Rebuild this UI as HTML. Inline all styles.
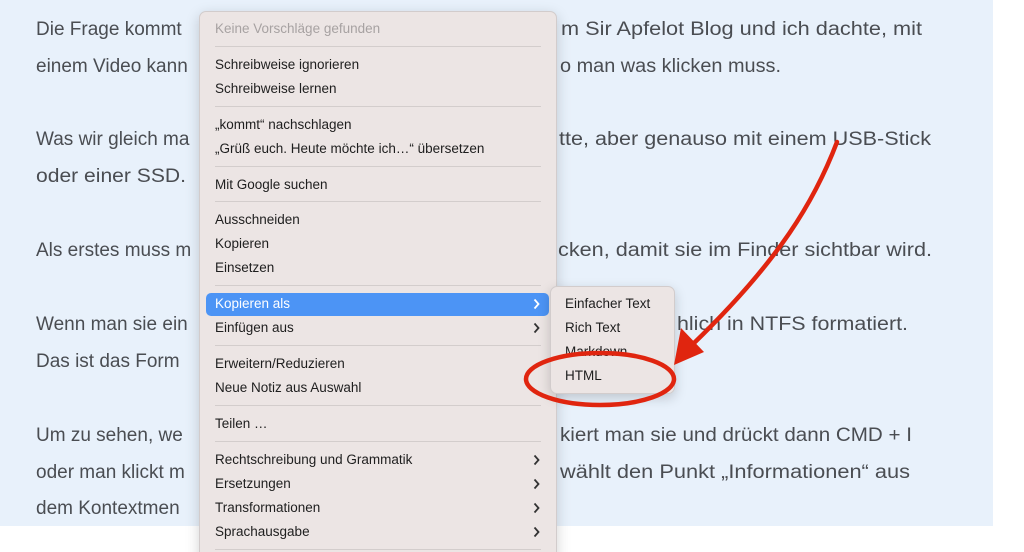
<!DOCTYPE html>
<html><head><meta charset="utf-8"><style>
html,body{margin:0;padding:0;width:1024px;height:552px;overflow:hidden;background:#fff;font-family:"Liberation Sans",sans-serif;position:relative}
.bg{position:absolute;left:0;top:0;width:993px;height:526px;background:#e8f1fb}
svg{position:absolute;left:0;top:0}
.menu{position:absolute;left:199px;top:11px;width:356px;height:550px;background:#ece5e4;border:1px solid #d2cccc;border-radius:7px;box-shadow:0 4px 14px rgba(0,0,0,.18)}
.it{position:absolute;left:15px;font-size:13.5px;color:#1e1e1e;height:24px;line-height:24px;white-space:nowrap}
.sep{position:absolute;left:15px;width:326px;height:1px;background:#d3cdcc}
.hl{position:absolute;left:6px;top:281px;width:343px;height:23px;background:#4c94f5;border-radius:5px}
.ch{position:absolute;left:333px;width:7px;height:12px}
.sub{position:absolute;left:550px;top:286px;width:123px;height:106px;background:#ece5e4;border:1px solid #d2cccc;border-radius:7px;box-shadow:0 4px 12px rgba(0,0,0,.18)}
.sub .it{left:14px}
</style></head><body>
<div class="bg"></div>
<svg width="1024" height="552" font-family="Liberation Sans, sans-serif" font-size="19" fill="#4a4d52">
<text x="36" y="35">Die Frage kommt</text>
<text x="561" y="35" textLength="361" lengthAdjust="spacingAndGlyphs">m Sir Apfelot Blog und ich dachte, mit</text>
<text x="36" y="72">einem Video kann</text>
<text x="560" y="72" textLength="221" lengthAdjust="spacingAndGlyphs">o man was klicken muss.</text>
<text x="36" y="145">Was wir gleich ma</text>
<text x="559" y="145" textLength="372" lengthAdjust="spacingAndGlyphs">tte, aber genauso mit einem USB-Stick</text>
<text x="36" y="182" textLength="150" lengthAdjust="spacingAndGlyphs">oder einer SSD.</text>
<text x="36" y="256">Als erstes muss m</text>
<text x="558" y="256" textLength="374" lengthAdjust="spacingAndGlyphs">cken, damit sie im Finder sichtbar wird.</text>
<text x="36" y="330">Wenn man sie ein</text>
<text x="677" y="330" textLength="231" lengthAdjust="spacingAndGlyphs">hlich in NTFS formatiert.</text>
<text x="36" y="367">Das ist das Form</text>
<text x="36" y="441">Um zu sehen, we</text>
<text x="560" y="441" textLength="352" lengthAdjust="spacingAndGlyphs">kiert man sie und drückt dann CMD + I</text>
<text x="36" y="478">oder man klickt m</text>
<text x="560" y="478" textLength="350" lengthAdjust="spacingAndGlyphs">wählt den Punkt „Informationen“ aus</text>
<text x="36" y="514">dem Kontextmen</text>
</svg>
<div class="menu">
<div class="it" style="top:5px;color:#a7a2a2">Keine Vorschläge gefunden</div>
<div class="sep" style="top:34px"></div>
<div class="it" style="top:41px">Schreibweise ignorieren</div>
<div class="it" style="top:65px">Schreibweise lernen</div>
<div class="sep" style="top:94px"></div>
<div class="it" style="top:101px">„kommt“ nachschlagen</div>
<div class="it" style="top:125px">„Grüß euch. Heute möchte ich…“ übersetzen</div>
<div class="sep" style="top:154px"></div>
<div class="it" style="top:161px">Mit Google suchen</div>
<div class="sep" style="top:189px"></div>
<div class="it" style="top:196px">Ausschneiden</div>
<div class="it" style="top:220px">Kopieren</div>
<div class="it" style="top:244px">Einsetzen</div>
<div class="sep" style="top:273px"></div>
<div class="hl"></div>
<div class="it" style="top:280px;color:#fff">Kopieren als</div>
<svg class="ch" style="left:333px;top:286px" viewBox="0 0 7 12"><polyline points="1.5,1.5 5.5,6 1.5,10.5" fill="none" stroke="#fff" stroke-width="1.8"/></svg>
<div class="it" style="top:304px">Einfügen aus</div>
<svg class="ch" style="left:333px;top:310px" viewBox="0 0 7 12"><polyline points="1.5,1.5 5.5,6 1.5,10.5" fill="none" stroke="#333" stroke-width="1.8"/></svg>
<div class="sep" style="top:333px"></div>
<div class="it" style="top:340px">Erweitern/Reduzieren</div>
<div class="it" style="top:364px">Neue Notiz aus Auswahl</div>
<div class="sep" style="top:393px"></div>
<div class="it" style="top:400px">Teilen …</div>
<div class="sep" style="top:429px"></div>
<div class="it" style="top:436px">Rechtschreibung und Grammatik</div>
<svg class="ch" style="left:333px;top:442px" viewBox="0 0 7 12"><polyline points="1.5,1.5 5.5,6 1.5,10.5" fill="none" stroke="#333" stroke-width="1.8"/></svg>
<div class="it" style="top:460px">Ersetzungen</div>
<svg class="ch" style="left:333px;top:466px" viewBox="0 0 7 12"><polyline points="1.5,1.5 5.5,6 1.5,10.5" fill="none" stroke="#333" stroke-width="1.8"/></svg>
<div class="it" style="top:484px">Transformationen</div>
<svg class="ch" style="left:333px;top:490px" viewBox="0 0 7 12"><polyline points="1.5,1.5 5.5,6 1.5,10.5" fill="none" stroke="#333" stroke-width="1.8"/></svg>
<div class="it" style="top:508px">Sprachausgabe</div>
<svg class="ch" style="left:333px;top:514px" viewBox="0 0 7 12"><polyline points="1.5,1.5 5.5,6 1.5,10.5" fill="none" stroke="#333" stroke-width="1.8"/></svg>
<div class="sep" style="top:537px"></div>
</div>
<div class="sub">
<div class="it" style="top:5px">Einfacher Text</div>
<div class="it" style="top:29px">Rich Text</div>
<div class="it" style="top:53px">Markdown</div>
<div class="it" style="top:77px">HTML</div>
</div>
<svg width="1024" height="552">
<ellipse cx="600" cy="379" rx="74" ry="26" fill="none" stroke="#e0250f" stroke-width="4.5"/>
<path d="M837 142 C815 200 780 260 692 345" fill="none" stroke="#e0250f" stroke-width="4.5" stroke-linecap="round"/>
<polygon points="674,365 681,328 704,352" fill="#e0250f"/>
</svg>
</body></html>
